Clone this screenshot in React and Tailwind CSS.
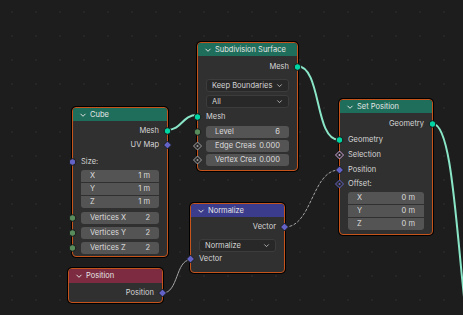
import React from "react";

const font = { fontFamily: "Inter, 'DejaVu Sans', sans-serif" };

function Socket({ kind = "circle", color = "#00d6a3", side = "left", hollow = false }) {
  const pos = side === "left" ? "-left-[5px]" : "-right-[5px]";
  return (
    <svg
      width="9"
      height="9"
      viewBox="0 0 9 9"
      className={`absolute ${pos} top-1/2 -translate-y-1/2`}
    >
      {kind === "circle" ? (
        <circle cx="4.5" cy="4.5" r="3.3" fill={color} stroke="#1a1a1a" strokeWidth="1" />
      ) : (
        <>
          <path d="M4.5 0.5 L8.5 4.5 L4.5 8.5 L0.5 4.5 Z" fill={hollow ? "#2b2b2b" : color} stroke={hollow ? color : "#1a1a1a"} strokeWidth="1" />
          {hollow && <circle cx="4.5" cy="4.5" r="1" fill={color} />}
        </>
      )}
    </svg>
  );
}

function Chevron() {
  return (
    <svg width="8" height="8" viewBox="0 0 8 8" className="shrink-0">
      <path d="M1.5 2.8 L4 5.3 L6.5 2.8" fill="none" stroke="#e0e0e0" strokeWidth="1" />
    </svg>
  );
}

function Node({ title, header, className, children }) {
  return (
    <div className={`absolute rounded-[4px] border border-[#c4541c] bg-[#303030] shadow-[0_0_0_1px_#000] ${className}`}>
      <div className={`flex h-[13px] items-center gap-[3px] whitespace-nowrap rounded-t-[3px] pl-[6px] text-[7.5px] text-[#e6e6e6] ${header}`}>
        <Chevron />
        <span>{title}</span>
      </div>
      {children}
    </div>
  );
}

function Row({ label, right, h = "h-[14px]", children }) {
  return (
    <div className={`relative flex ${h} items-center whitespace-nowrap px-[8px] text-[7.5px] text-[#d6d6d6] ${right ? "justify-end" : ""}`}>
      <span>{label}</span>
      {children}
    </div>
  );
}

function Field({ label, value, rounded = "rounded-[3px]", children }) {
  return (
    <div className="relative h-[12px]">
      <div className={`mx-[8px] flex h-full items-center justify-between gap-[3px] whitespace-nowrap bg-[#545454] px-[9px] text-[7.5px] text-[#dcdcdc] ${rounded}`}>
        <span className="overflow-hidden">{label}</span>
        <span>{value}</span>
      </div>
      {children}
    </div>
  );
}

function Dropdown({ label, cls = "" }) {
  return (
    <div className={`mx-[8px] flex h-[13px] items-center justify-between whitespace-nowrap rounded-[3px] border border-[#3c3c3c] bg-[#282828] px-[5px] text-[7.5px] text-[#d6d6d6] ${cls}`}>
      <span>{label}</span>
      <svg width="7" height="7" viewBox="0 0 8 8">
        <path d="M1.5 2.8 L4 5.3 L6.5 2.8" fill="none" stroke="#bdbdbd" strokeWidth="1" />
      </svg>
    </div>
  );
}

const GEO = "#00d6a3";
const VEC = "#6363c7";
const INT = "#598c5c";
const FLT = "#a1a1a1";
const BOOL = "#cca6d6";

export default function App() {
  return (
    <div
      className="relative h-[315px] w-[463px] overflow-hidden bg-[#1d1d1d] bg-[radial-gradient(circle,#262626_0.8px,transparent_1px)] bg-[size:24px_24px]"
      style={font}
    >
      <svg width="463" height="315" className="absolute left-0 top-0">
        <g fill="none" stroke="#8ae6c8" strokeWidth="2" strokeLinecap="round">
          <path d="M167 130 C182 130 182 115 197 115" />
          <path d="M297 66 C322 66 314 140 339 140" />
          <path d="M433 124 C452 124 456 230 466 315" />
        </g>
        <g fill="none" stroke="#a6a6a6" strokeWidth="1">
          <path d="M163 293 C178 293 176 260 190 260" />
          <path d="M285 227 C312 227 312 170 339 170" strokeDasharray="3 1.5" />
        </g>
      </svg>

      {/* Cube */}
      <Node title="Cube" header="bg-[#1e6e5b]" className="left-[72px] top-[107px] w-[96px] h-[150px]">
        <div className="pt-[3px]">
          <Row label="Mesh" right>
            <Socket side="right" color={GEO} />
          </Row>
          <Row label="UV Map" right>
            <Socket side="right" kind="diamond" color={VEC} />
          </Row>
          <Row label="Size:" h="h-[14px] mt-[3px]">
            <Socket color={VEC} />
          </Row>
          <div className="mt-[1px] flex flex-col gap-[1px]">
            <Field label="X" value="1 m" rounded="rounded-t-[3px]" />
            <Field label="Y" value="1 m" rounded="rounded-none" />
            <Field label="Z" value="1 m" rounded="rounded-b-[3px]" />
          </div>
          <div className="mt-[4px] flex flex-col gap-[3px]">
            <Field label="Vertices X" value="2">
              <Socket color={INT} />
            </Field>
            <Field label="Vertices Y" value="2">
              <Socket color={INT} />
            </Field>
            <Field label="Vertices Z" value="2">
              <Socket color={INT} />
            </Field>
          </div>
        </div>
      </Node>

      {/* Subdivision Surface */}
      <Node title="Subdivision Surface" header="bg-[#1e6e5b]" className="left-[197px] top-[42px] w-[101px] h-[129px]">
        <div className="pt-[4px]">
          <Row label="Mesh" right>
            <Socket side="right" color={GEO} />
          </Row>
          <Dropdown label="Keep Boundaries" cls="mt-[5px]" />
          <Dropdown label="All" cls="mt-[3px]" />
          <Row label="Mesh" h="h-[14px] mt-[2px]">
            <Socket color={GEO} />
          </Row>
          <div className="mt-[2px] flex flex-col gap-[2px]">
            <Field label="Level" value="6">
              <Socket color={INT} />
            </Field>
            <Field label="Edge Creas" value="0.000">
              <Socket kind="diamond" hollow color={FLT} />
            </Field>
            <Field label="Vertex Crea" value="0.000">
              <Socket kind="diamond" hollow color={FLT} />
            </Field>
          </div>
        </div>
      </Node>

      {/* Set Position */}
      <Node title="Set Position" header="bg-[#1e6e5b]" className="left-[339px] top-[99px] w-[94px] h-[136px]">
        <div className="pt-[4px]">
          <Row label="Geometry" right>
            <Socket side="right" color={GEO} />
          </Row>
          <Row label="Geometry" h="h-[15px] mt-[1px]">
            <Socket color={GEO} />
          </Row>
          <Row label="Selection" h="h-[15px]">
            <Socket kind="diamond" hollow color={BOOL} />
          </Row>
          <Row label="Position" h="h-[15px]">
            <Socket kind="diamond" color={VEC} />
          </Row>
          <Row label="Offset:">
            <Socket kind="diamond" hollow color={VEC} />
          </Row>
          <div className="mt-[1px] flex flex-col gap-[1px]">
            <Field label="X" value="0 m" rounded="rounded-t-[3px]" />
            <Field label="Y" value="0 m" rounded="rounded-none" />
            <Field label="Z" value="0 m" rounded="rounded-b-[3px]" />
          </div>
        </div>
      </Node>

      {/* Normalize */}
      <Node title="Normalize" header="bg-[#3c3c8c]" className="left-[190px] top-[203px] w-[95px] h-[70px]">
        <div className="pt-[3px]">
          <Row label="Vector" right>
            <Socket side="right" kind="diamond" color={VEC} />
          </Row>
          <Dropdown label="Normalize" cls="mt-[5px]" />
          <Row label="Vector" h="h-[13px]">
            <Socket kind="diamond" color={VEC} />
          </Row>
        </div>
      </Node>

      {/* Position */}
      <Node title="Position" header="bg-[#7d2b40] h-[14px]" className="left-[68px] top-[268px] w-[95px] h-[35px]">
        <div className="pt-[3px]">
          <Row label="Position" right>
            <Socket side="right" kind="diamond" color={VEC} />
          </Row>
        </div>
      </Node>
    </div>
  );
}
